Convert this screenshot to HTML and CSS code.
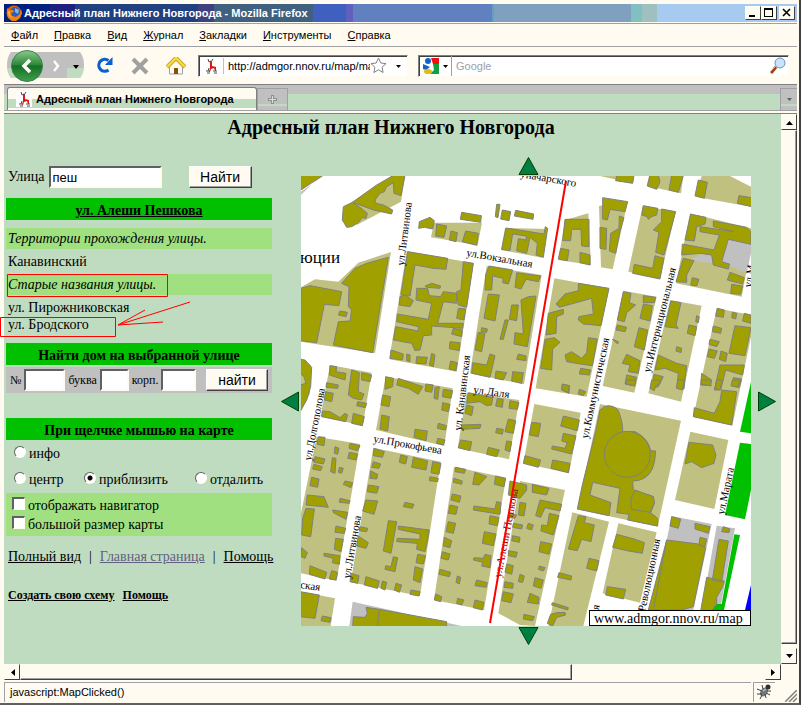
FILE: index.html
```html
<!DOCTYPE html>
<html lang="ru">
<head>
  <meta charset="UTF-8">
  <title>Адресный план Нижнего Новгорода</title>
  <meta name="viewport" content="width=device-width, initial-scale=1.0">
  <link rel="stylesheet" href="styles.css">
</head>
<body>
<div class="window">

  <header class="titlebar">
    <svg class="icon" width="16" height="16" viewBox="0 0 16 16">
      <circle cx="8" cy="8" r="7.5" fill="#e66000"/>
      <circle cx="9" cy="7" r="5" fill="#2a5fb8"/>
      <path d="M9 3l4 2-1 4-3-2z" fill="#7ab8e8"/>
      <path d="M1 3l2 2 4 0 1 2-3 1 1 3 4 1 4-3 1-5 1 4-2 5-4 3H6l-4-3-1-5z" fill="#f08010"/>
      <path d="M2 6l2 1 0 3 3 3-4-2z" fill="#ffc040"/>
    </svg>
    <span class="title">Адресный план Нижнего Новгорода - Mozilla Firefox</span>
    <button class="win-btn" aria-label="Свернуть"><svg width="12" height="10"><path d="M2 7h6v2H2z"/></svg></button>
    <button class="win-btn" aria-label="Развернуть"><svg width="12" height="10"><path d="M1 0h9v9H1zM2 2v6h7V2z" fill-rule="evenodd"/></svg></button>
    <button class="win-btn close" aria-label="Закрыть"><svg width="12" height="10"><path d="M2 1l7 7M9 1L2 8" stroke="#000" stroke-width="1.6"/></svg></button>
  </header>

  <nav class="menu">
    <a href="#"><u>Ф</u>айл</a>
    <a href="#"><u>П</u>равка</a>
    <a href="#"><u>В</u>ид</a>
    <a href="#"><u>Ж</u>урнал</a>
    <a href="#"><u>З</u>акладки</a>
    <a href="#"><u>И</u>нструменты</a>
    <a href="#"><u>С</u>правка</a>
  </nav>

  <div class="toolbar">
    <button class="tool nav-pair" aria-label="Назад и вперёд">
      <svg width="78" height="32" viewBox="0 0 78 32">
        <defs>
          <linearGradient id="back" x1="0" y1="0" x2="0" y2="1">
            <stop offset="0" stop-color="#8cc88c"/><stop offset=".45" stop-color="#2f8a3c"/><stop offset=".5" stop-color="#157020"/><stop offset="1" stop-color="#3fa050"/>
          </linearGradient>
        </defs>
        <path d="M4 2h69q4 5 4 13t-4 13H4q-4-5-4-13T4 2z" fill="#c0c0c0"/>
        <path d="M1 18h27v10H4q-3-4-3-10zM60 18h17q-1 6-4 10H60z" fill="#c0dcc0"/>
        <circle cx="20" cy="16" r="15.5" fill="url(#back)" stroke="#408050"/>
        <path d="M23 10l-6 6 6 6" fill="none" stroke="#fff" stroke-width="3.5"/>
        <path d="M47 11l4 5-4 5" fill="none" stroke="#fffbf0" stroke-width="2.5"/>
        <path d="M66 15h6l-3 4z"/>
      </svg>
    </button>
    <button class="tool" aria-label="Обновить">
      <svg width="17" height="17" viewBox="0 0 17 17"><path d="M12.500 13a6 6 0 1 1 0-9.500" fill="none" stroke="#0a60d0" stroke-width="3.200"/><path d="M16.500 0v8H9z" fill="#0a60d0"/></svg>
    </button>
    <button class="tool" aria-label="Остановить">
      <svg width="18" height="18" viewBox="0 0 18 18"><path d="M2 2l14 14M16 2L2 16" stroke="#a0a0a0" stroke-width="4"/></svg>
    </button>
    <button class="tool" aria-label="Домой">
      <svg width="20" height="18" viewBox="0 0 20 18">
        <path d="M3.500 9v8h13V9L10 3z" fill="#fffbf0" stroke="#a0a0b0"/>
        <path d="M8 11h4v6H8z" fill="#8a5010"/>
        <path d="M1 10l9-9 9 9" fill="none" stroke="#c09020" stroke-width="4"/>
        <path d="M1 10l9-9 9 9" fill="none" stroke="#f8d840" stroke-width="2.500"/>
      </svg>
    </button>
    <div class="box address">
      <span class="favicon"><svg width="16" height="16" viewBox="0 0 16 16"><path d="M5 1l1 3 2-1M10 1l-2 3" fill="none" stroke="#604040"/><path d="M7 3l2 1v4l4 1v4h-1l-1-3-3 1-1 3H6l1-4z" fill="#d81818"/><path d="M3 13h4M10 13h4M4 15h3M11 15h3M6 10l-1 3" stroke="#505050"/></svg></span>
      <input type="text" value="http://admgor.nnov.ru/map/map.php" aria-label="Адрес">
      <svg width="17" height="17" viewBox="0 0 17 17"><path d="M8.500 1l2.300 5 5.200.6-3.900 3.600 1 5.300-4.600-2.700-4.600 2.700 1-5.300L1 6.600 6.200 6z" fill="#fff" stroke="#808080"/></svg>
      <svg class="drop" width="20" height="8" viewBox="0 0 20 8"><path d="M9 3h5l-2.500 3z"/></svg>
    </div>
    <div class="box search">
      <svg width="17" height="16" viewBox="0 0 17 16">
        <path d="M8 0h8v6h-6z" fill="#f01010"/><path d="M10 6h6v10H7l4-4z" fill="#10a040"/>
        <circle cx="5" cy="3" r="3" fill="#1060d0"/><path d="M0 6l7 3-4 3-3-1z" fill="#1060d0"/><ellipse cx="5" cy="13.500" rx="4" ry="2.500" fill="#e8b810"/>
      </svg>
      <svg class="engine" width="11" height="8" viewBox="0 0 11 8"><path d="M3 3h5L5.500 6z"/></svg>
      <input type="text" placeholder="Google" aria-label="Поиск Google">
      <svg width="17" height="17" viewBox="0 0 17 17"><path d="M7 10l-5 6" stroke="#a04010" stroke-width="3"/><path d="M6 10l-5 5" stroke="#f0a040"/><circle cx="11" cy="6" r="5" fill="#c8e4ff" stroke="#7090b8"/></svg>
    </div>
  </div>

  <div class="tabs">
    <div class="tab">
      <span class="favicon"><svg width="16" height="16" viewBox="0 0 16 16"><path d="M5 1l1 3 2-1M10 1l-2 3" fill="none" stroke="#604040"/><path d="M7 3l2 1v4l4 1v4h-1l-1-3-3 1-1 3H6l1-4z" fill="#d81818"/><path d="M3 13h4M10 13h4M4 15h3M11 15h3M6 10l-1 3" stroke="#505050"/></svg></span>
      Адресный план Нижнего Новгорода
    </div>
    <button class="tab-btn" aria-label="Новая вкладка"><svg width="9" height="9"><path d="M3 0h3v3h3v3H6v3H3V6H0V3h3z" fill="#909090"/><path d="M4 1h1v3h3v1H5v3H4V5H1V4h3z" fill="#ddd"/></svg></button>
    <button class="tab-btn list" aria-label="Список вкладок"><svg width="7" height="5"><path d="M1 1h5L3.500 4z" fill="#606060"/></svg></button>
  </div>

  <div class="viewport">
    <div class="page">
      <h1>Адресный план Нижнего Новгорода</h1>

      <div class="columns">
        <aside class="panel">
          <form class="street">
            <label for="street">Улица</label>
            <input type="text" id="street" value="пеш">
            <button type="button">Найти</button>
          </form>

          <h2><a href="#">ул. Алеши Пешкова</a></h2>
          <h3>Территории прохождения улицы.</h3>
          <p>Канавинский</p>
          <h3>Старые названия улицы.</h3>
          <p>ул. Пирожниковская<br>ул. Бродского</p>

          <h2>Найти дом на выбранной улице</h2>
          <form class="house">
            <label for="num">№</label> <input type="text" id="num" class="num">
            <label for="letter">буква</label> <input type="text" id="letter" class="letter">
            <label for="block">корп.</label> <input type="text" id="block" class="block">
            <button type="button">найти</button>
          </form>

          <h2>При щелчке мышью на карте</h2>
          <form class="mode">
            <label class="info"><input type="radio" name="mode">инфо</label>
            <label><input type="radio" name="mode">центр</label>
            <label><input type="radio" name="mode" checked>приблизить</label>
            <label><input type="radio" name="mode">отдалить</label>
          </form>
          <div class="options">
            <label><input type="checkbox">отображать навигатор</label>
            <label><input type="checkbox">большой размер карты</label>
          </div>

          <div class="links">
            <a href="#">Полный вид</a> <span>|</span> <a href="#" class="visited">Главная страница</a> <span>|</span> <a href="#">Помощь</a>
          </div>
          <div class="links small">
            <a href="#">Создать свою схему</a> <a href="#">Помощь</a>
          </div>
        </aside>

        <div class="map-grid">
          <a href="#" class="up" aria-label="Север"><svg width="21" height="18"><path d="M10.500 0.500L20 17.500H1z" fill="#008040" stroke="#004000"/></svg></a>
          <a href="#" class="left" aria-label="Запад"><svg width="18" height="21"><path d="M0.500 10.500L17.500 1v19z" fill="#008040" stroke="#004000"/></svg></a>
          <svg class="map" viewBox="301 176 450 450">
            <rect x="301" y="176" width="450" height="450" fill="#fff"/>

            <!-- north-west -->
            <g transform="translate(290 150) scale(.33333)">
              <g class="land">
                <path d="M190 155L305 78H345L333 155 200 225zM432 218L576 218 563 286 423 262zM645 234L773 237 757 323 633 300z"/>
                <path d="M33 412L75 388 145 395 205 338 303 306 255 610 33 575z"/>
                <path d="M350 303L551 340 500 665 298 628zM590 348L755 375 702 703 540 670z"/>
              </g>
              <path class="grey" d="M33 125L100 78 90 78 33 135z"/>
              <g class="bld">
                <path d="M30 122L100 75H30zM187 157L160 170 157 210 170 232 185 230 205 218 217 203 228 205 232 190 210 172z"/>
                <path d="M187 157L260 105 310 76H345L333 137 312 130 310 98 290 110 283 125 270 130 255 150 258 160 280 165 308 180 305 192 250 180z"/>
                <path d="M388 215L420 202 433 212 428 237 403 232 386 235zM440 222L470 228 462 262 437 258zM483 243L502 248 498 275 478 270zM527 243L565 250 560 286 517 275zM515 187L574 197 572 217 511 208z"/>
                <path d="M620 163H630L624 203 616 200zM637 180L662 185 657 212 632 207zM677 181L731 192 729 208 673 198z"/>
                <path d="M648 234L762 252 766 230 773 235 760 322 738 315 742 280 720 262 710 310 680 302 685 266 710 270 708 258 668 252 660 302 635 298z"/>
                <path d="M33 415L60 407 155 425 147 467 103 463 80 578 30 572zM155 400L195 355 230 340 295 322 248 608 130 585 145 515 180 513 185 480 175 470 177 410zM150 483L172 487 168 500 145 495z"/>
                <path d="M353 305L473 325 468 358 430 355 375 345 360 438 333 435zM520 335L550 340 530 472 505 465 500 425 513 420z"/>
                <path d="M405 408L425 400 452 408 450 415 410 412zM380 415L413 415 418 437 452 440 460 425 500 430 500 460 460 455 443 520 520 520 518 535 425 528 425 555 400 557 390 600 375 602 365 580 310 570 317 530 385 543 385 530 320 515 322 492 415 508 425 460 378 450z"/>
                <path d="M330 440L345 435 370 452 360 470 328 465zM505 475L527 477 522 510 500 505zM490 535L517 540 515 560 485 552zM480 575L510 578 508 602 478 596zM482 633L502 638 498 662 477 657zM303 600L340 612 338 630 300 625zM350 612L360 615 360 635 350 632zM380 620L412 622 408 642 378 640zM425 610L435 615 430 650 418 645z"/>
                <path d="M597 348L668 360 655 402 638 398 640 385 608 378 605 420 585 420 587 375zM680 368L752 378 745 395 708 388 693 417 675 412zM595 432L628 435 615 513 582 505zM665 465L685 465 680 512 658 508zM645 510L655 510 640 568 630 568zM565 547L585 550 575 605 555 600zM575 533L592 537 590 547 573 545z"/>
                <path d="M693 450L715 440 738 438 712 590 672 582 675 548 700 552zM600 612L615 617 600 682 545 670 548 638 590 645zM618 663L650 668 640 690 615 685zM668 665L700 668 695 700 665 693zM685 612L708 618 708 632 680 628z"/>
              </g>
            </g>

            <!-- north-east -->
            <g transform="translate(520 150) scale(.33333)">
              <g class="land">
                <path d="M240 78H342L338 100zM387 78H490L483 130 380 108zM545 78H630L693 110V170L525 140z"/>
                <path d="M205 190L213 345 115 330 135 210zM237 168L323 155 278 358 243 352zM368 168L467 185 420 387 325 365zM510 190L693 235V290L665 440 468 400z"/>
                <path d="M103 385L267 415 200 740 47 715zM310 422L410 440 343 728 248 708zM450 450L545 467 483 755 385 730zM590 475L693 495V560L637 827 520 800z"/>
              </g>
              <path class="grey" d="M610 262L693 283V310L680 370 610 340zM545 312L580 318 575 340 510 330z"/>
              <g class="bld">
                <path d="M290 76H342L338 100 287 92zM390 76H415L420 95 410 118 382 108zM455 76H490L475 127 447 120zM535 90L562 97 553 145 525 137zM657 137L695 143V170L652 160z"/>
                <path d="M135 208H207V290L185 288 183 238 155 238 152 272 128 272zM122 295L147 300 142 332 115 327zM180 307L210 315V345L180 338z"/>
                <path d="M248 143L323 155 315 185 270 178 262 210 248 207zM240 232L260 235 258 298 240 295zM298 198L312 203 300 245 287 310 268 303 272 250 297 235z"/>
                <path d="M370 167L413 175 410 195 395 200 385 208 382 200 365 195zM425 177L467 185 432 315 407 307 417 247 400 240 425 215zM405 317L432 325 420 387 338 370 343 343 398 355z"/>
                <path d="M512 193L558 202 555 222 530 230 523 273 495 270zM580 213L680 232 693 245V283L625 268 605 335 628 342 625 357 580 345 575 315 540 310 485 315 487 282 582 300 598 255 540 245 540 230 640 245 580 230zM490 325L522 332 500 375 500 397 468 395zM517 383L537 388 530 408 512 405zM630 367L673 383 668 402 622 390zM635 403L668 408 662 433 632 430z"/>
                <path d="M175 400L267 415 243 527 190 522 175 510 177 500 220 492 215 445 118 472 108 462 135 432 175 422zM85 490L130 478 130 492 110 500 108 550 78 555zM75 568L103 563 120 577 98 597 95 660 62 655zM205 563L232 567 217 647 168 640 140 635 135 615 155 605 185 625 200 608zM182 655L212 660 208 675 178 672zM127 703L148 707 147 730 125 720z"/>
                <path d="M310 425L333 430 328 458 347 465 320 488 313 515 292 510zM370 437L407 442 403 458 370 458zM370 462L397 467 390 513 360 505zM292 525L320 532 315 545 288 540zM357 533L383 540 373 600 343 590zM320 613L360 632 355 670 325 665 330 645 307 640zM320 675L350 682 343 708 315 702zM277 568L295 575 293 582z"/>
                <path d="M453 453L483 458 468 525 475 535 435 530zM507 525L530 530 525 557 502 550zM530 497L538 500 535 518 527 515zM470 590L485 595 483 608 468 603zM415 615L470 640 500 647 492 717 470 715 475 670 435 655 405 660zM402 673L430 680 415 710 395 715z"/>
                <path d="M592 475L613 480 610 502 587 498zM637 487L650 490 647 507 635 503zM673 490L693 495V520L668 513zM645 527L693 533 675 617 627 610zM580 528L605 535 602 550 577 545zM570 568L598 575 590 590 567 583zM567 597L592 603 583 625 562 620zM603 603L622 610 617 635 598 628zM600 645L673 645 668 675 617 660 602 720 583 720zM545 670L575 690 570 707 542 705zM640 683L665 687 658 712 637 707z"/>
              </g>
            </g>

            <!-- south-west -->
            <g transform="translate(290 380) scale(.33333)">
              <g class="land">
                <path d="M33 -65L62 -45 60 40 33 95zM120 -45L245 -22 218 137 92 108zM287 -10L488 25 463 198 258 150zM530 38L688 60 657 238 503 205z"/>
                <path d="M80 170L210 192 140 602 33 580V400zM250 203L452 245 390 648 182 607zM492 260L648 293 582 690 432 660zM33 635L135 655 122 738H33z"/>
              </g>
              <path class="grey" d="M188 665L300 690 515 738H178z"/>
              <g class="bld">
                <path d="M30 -62L45 -60 65 -38 62 20 50 60 30 95V15L48 10 42 -10 30 -20zM120 -43L140 -40 138 -25 168 -20 165 0 118 -15zM185 -30L208 -22 205 35 222 42 215 60 190 55 175 45zM215 -22L245 -15 240 5 215 0zM110 8L145 15 143 25 108 22zM107 35L130 40 125 65 103 60zM98 93L120 95 150 113 165 100 173 105 167 125 95 110zM190 100L223 110 217 137 185 130zM203 65L230 70 226 83 200 77z"/>
                <path d="M287 -10L310 -5 308 20 285 28zM325 -5L398 20 385 43 355 25 320 15zM408 12L430 15 425 37 405 33zM435 22L448 20 443 58 432 55zM460 28L488 32 483 55 457 50zM278 45L302 50 297 80 273 75zM458 68L480 73 475 95 455 90zM275 105L298 110 293 153 270 147zM375 148L412 153 408 182 372 172zM445 130L470 137 466 150 442 145zM443 175L465 180 460 195 440 190z"/>
                <path d="M535 38L608 52 605 75 590 77 570 65 530 70zM530 75L550 80 545 107 525 100zM622 55L640 58 637 82 617 78zM660 62L687 68 682 88 657 85zM515 135L573 133 570 145 515 148zM620 145L640 148 637 163 617 158zM655 117L677 122 670 160 645 155zM512 180L545 185 540 212 505 203zM595 202L628 210 620 230 590 223zM650 183L665 185 660 215 645 210z"/>
                <path d="M85 170L105 172 102 197 82 193zM180 190L210 197 203 212 177 205zM178 217L203 222 198 240 173 235zM135 200L147 205 143 223 133 220zM75 230L105 237 100 252 72 247zM72 253L97 260 92 272 68 267zM127 233L138 235 135 280 122 275zM148 262L160 265 155 280 145 277zM65 292L87 297 83 322 60 317zM165 303L188 308 183 323 160 313zM52 345L102 350 115 382 48 375zM150 355L180 362 178 370 148 367zM48 385L73 387 62 470 35 465 38 415zM128 390L173 397 168 418 130 398zM138 438L167 445 163 460 135 457zM137 475L160 478 153 515 133 508zM35 503L52 518 45 535 33 530zM102 520L150 527 148 553 127 548 130 535 102 528zM60 557L110 577 105 597 58 583zM125 572L143 577 138 600 118 597z"/>
                <path d="M252 205L283 215 277 232 250 227zM250 245L272 252 267 265 245 262zM242 273L263 283 260 297 240 295zM235 315L267 320 260 340 232 335zM228 360L263 363 252 403 218 393zM332 225L352 230 347 252 328 247zM370 232L413 243 408 270 365 262zM428 245L453 250 447 283 423 278zM420 290L445 295 443 305 418 302zM345 367L372 373 367 385 340 380zM295 422L320 425 303 520 280 513zM325 438L418 450 412 485 405 515 380 508 382 490 320 485 322 475 390 478 390 462 325 448zM210 440L233 445 230 455 208 452zM205 468L235 488 228 505 200 498zM310 530L323 533 315 575 285 568 287 557 303 560zM383 523L407 527 400 552 378 548zM375 560L398 567 390 608 370 600zM183 580L207 587 203 610 180 605zM228 590L268 603 262 625 223 615zM277 603L290 607 285 630 273 625zM318 610L335 615 328 637 313 630zM363 630L390 635 387 648 360 643z"/>
                <path d="M497 262L527 268 523 280 495 275zM492 295L517 303 515 313 490 307zM555 277L590 290 567 315 548 313zM617 288L647 295 642 320 613 313zM487 342L513 348 508 367 483 360zM480 375L503 380 498 403 475 400zM552 378L615 387 620 365 633 368 630 403 550 390zM600 407L627 413 622 437 597 432zM475 425L497 430 490 460 468 455zM583 455L618 462 610 497 577 490zM463 472L485 482 480 503 460 498zM457 515L480 522 475 540 453 535zM552 533L580 535 585 523 603 527 600 563 575 558 578 547 550 540zM450 568L482 577 478 590 447 583zM502 588L512 592 508 612 498 607zM560 600L592 608 588 622 555 617zM437 642L455 650 452 665 433 660zM503 655L522 660 515 675 500 670zM555 660L582 667 577 690 550 683z"/>
                <path d="M30 635L88 645 75 715 30 710zM97 708L123 713 120 727 93 722zM228 682L268 688 470 725V740H188L190 710 225 712 232 700zM268 688L262 738"/>
              </g>
            </g>

            <!-- south-east -->
            <g transform="translate(520 380) scale(.33333)">
              <g class="land">
                <path d="M43 72L182 98 147 280 10 250zM0 303L135 330 45 738 0 735 -65 700zM240 72L483 122 413 440 172 388zM511 155L625 180 583 387 465 360zM157 397L267 425 190 738H85zM295 430L410 457 360 668 248 640z"/>
              </g>
              <path class="grey" d="M455 408L575 432 520 690H390L440 480zM590 437L645 445 600 690H545z"/>
              <path class="park" d="M693 5V160L660 155zM660 188L693 192V330L675 418 615 405zM643 463L660 465 612 690H575L577 672 605 672z"/>
              <path class="river" d="M693 615V690H675z"/>
              <g class="bld">
                <path d="M127 12L148 17 145 37 125 30zM178 28L197 35 190 47 175 42zM35 127L62 130 55 170 28 165zM130 108L178 120 172 152 122 138zM130 160L168 168 155 222 95 207 97 198 135 205 142 188 125 183zM15 227L62 240 55 262 10 250zM98 240L150 250 145 278 93 265z"/>
                <path d="M320 0L347 0 345 18 318 12zM395 0H420V10L408 15 403 32 390 25zM473 0H493L487 30 470 25zM543 0H573V18L545 12zM590 0H607L600 30 585 25zM637 0H660L655 22 633 18zM605 30L650 35 635 135 520 110 523 83 583 100 600 65z"/>
                <path d="M240 90Q265 65 293 88 310 125 308 160 325 152 345 155 385 175 392 212L407 213Q405 275 375 293 355 305 338 303L340 330 400 350 403 370 392 398 413 415V438L323 420 327 403 290 398 300 325 218 307 210 345 273 368 267 407 172 387 187 315 228 150z"/>
                <circle cx="322" cy="223" r="69"/><path d="M345 330L400 350 403 370 390 397 335 388 332 360z"/>
                <path d="M507 187L578 195 588 225 582 250 545 263 515 245 495 252z"/>
                <path d="M175 407L198 410 193 428 223 435 213 485 185 478 172 512 145 507zM290 463L343 477 373 488 367 520 320 512 278 502zM207 535L237 542 230 573 200 565zM117 578L155 588 153 600 113 592zM262 620L317 628 310 657 257 645zM97 668L145 683 143 690 95 675zM92 703L110 698 135 697 137 705 110 712 98 738 82 730z"/>
                <path d="M-30 303L20 315 20 330 0 355 -35 345zM37 313L87 325 80 345 37 337zM60 360L125 373 120 393 75 383 62 412 47 407zM88 400L117 407 100 465 63 453 65 435 82 437zM0 367L18 370 12 408 -5 405zM25 430L40 435 35 450 20 445zM62 485L95 492 87 523 57 515zM-32 400L-10 405 -15 415 -35 412zM-20 430L8 435 5 447 -22 442zM-22 467L0 472 -2 487 -25 482zM-35 512L-8 517 -12 532 -35 527zM-40 552L-20 557 -25 583 -45 577zM0 583L13 588 8 607 -5 605zM58 558L75 563 70 573 55 568zM45 593L70 600 63 625 40 618zM30 640L57 652 55 672 22 667zM12 703L43 710 38 722 10 717zM-45 605L-20 610 -22 625 -48 622zM-50 635L-20 642 -27 668 -55 662z"/>
                <path d="M455 410L482 417 475 445 450 438zM525 430L570 440 565 460 525 447zM610 440L630 447 627 458 605 455zM540 472L560 477 555 500 537 495zM440 480L535 492 557 503 520 680 485 690H385zM440 480L400 690"/>
                <path d="M597 478L625 483 605 605 577 600zM560 592L613 603 608 620 590 652 590 672 575 692H542z"/>
              </g>
            </g>

            <g class="names">
              <text transform="translate(404 266) rotate(-83)">ул.Литвинова</text>
              <text transform="translate(466 256) rotate(10)">ул.Вокзальная</text>
              <text transform="translate(520 177) rotate(10)">уначарского</text>
              <text transform="translate(461 431) rotate(-83)">ул. Канавинская</text>
              <text transform="translate(473 393) rotate(8)">ул.Даля</text>
              <text transform="translate(373 442) rotate(10)">ул.Прокофьева</text>
              <text transform="translate(311 461) rotate(-79)">ул.Долгополова</text>
              <text transform="translate(350 579) rotate(-80)">ул.Литвинова</text>
              <text transform="translate(588 439) rotate(-78)">ул.Коммунистическая</text>
              <text transform="translate(650 373) rotate(-76)">ул.Интернациональная</text>
              <text transform="translate(724 515) rotate(-78)">ул.Марата</text>
              <text transform="translate(645 612) rotate(-78)">Революционная</text>
              <text transform="translate(300 588) rotate(8)">ская</text>
              <text transform="translate(598 615) rotate(-80)">ая</text>
              <text transform="translate(751 288) rotate(-80)">ул.М</text>
              <text class="chosen" transform="translate(501 578) rotate(-79)">ул.Алеши Пешкова</text>
              <text class="big" x="300" y="263">юции</text>
            </g>
            <path class="route" d="M566 181L490 623"/>
            <rect x="589.500" y="610.500" width="161" height="15" fill="#fff" stroke="#000"/>
            <text class="site" x="594" y="623">www.admgor.nnov.ru/map</text>
          </svg>
          <a href="#" class="right" aria-label="Восток"><svg width="18" height="21"><path d="M17.500 10.500L0.500 1v19z" fill="#008040" stroke="#004000"/></svg></a>
          <a href="#" class="down" aria-label="Юг"><svg width="21" height="18"><path d="M10.500 17.500L20 0.500H1z" fill="#008040" stroke="#004000"/></svg></a>
        </div>
      </div>

      <!-- red notes over the page -->
      <svg class="notes" width="200" height="70" viewBox="0 0 200 70">
        <path d="M7.500 4.500h160v22H7.500zM0.500 47.500h115v19H0.500z"/>
        <path d="M190 32L118 55 145 40M118 55L163 52"/>
      </svg>
    </div>

    <div class="vscroll">
      <button aria-label="Вверх"><svg width="9" height="5"><path d="M1 5h7L4.500 1z"/></svg></button>
      <div class="thumb"></div>
      <button aria-label="Вниз"><svg width="9" height="5"><path d="M1 0h7L4.500 4z"/></svg></button>
    </div>
    <div class="hscroll">
      <button aria-label="Влево"><svg width="5" height="9"><path d="M5 1v7L1 4.500z"/></svg></button>
      <div class="thumb"></div>
      <button aria-label="Вправо"><svg width="5" height="9"><path d="M0 1v7l4-3.500z"/></svg></button>
    </div>
  </div>

  <footer class="status">
    <span class="message">javascript:MapClicked()</span>
    <span class="bug"><svg width="18" height="17" viewBox="0 0 18 17"><ellipse cx="8" cy="9" rx="3.500" ry="5" transform="rotate(35 8 9)" fill="#707880"/><path d="M1 6l5 2M1 11h5M4 16l2-4M14 12l-4-2M15 8h-4M6 2l1 4M10 15l-1-4" stroke="#404040"/><circle cx="12" cy="4" r="2.500" fill="#303030"/><path d="M7 8l3-2" stroke="#dde"/></svg></span>
    <svg class="grip" width="12" height="12"><path d="M0 12L12 0M4 12l8-8M8 12l4-4" stroke="#808080" stroke-width="1.500"/></svg>
  </footer>

</div>
</body>
</html>
```
FILE: styles.css
```css
* {
  box-sizing: border-box;
}
body {
  margin: 0;
  background: #fffbf0;
  color: #000;
  font-family: "Liberation Sans", Arial, sans-serif;
  font-size: 11px;
}
a {
  color: #000;
}
button, input {
  font-family: "Liberation Sans", Arial, sans-serif;
  margin: 0;
}
svg {
  display: block;
  flex: none;
}
.window {
  display: flex;
  flex-direction: column;
  min-height: 100vh;
  padding: 4px 2px 1px 4px;
  border-right: 2px solid #404040;
  border-bottom: 2px solid #606060;
}

/* title bar */
.titlebar {
  display: flex;
  align-items: center;
  height: 18px;
  padding: 0 2px 0 2px;
  background: linear-gradient(90deg, #002080 0 46px, #202080 0 71px, #204080 0 194px, #404080 0 210px, #406080 0 309px, #4060c0 0 342px, #6060c0 0 349px, #6080c0 0 488px, #60a0c0 0 490px, #80a0c0 0 627px, #80c0c0 0 638px, #a0c0c0 0 653px, #a6caf0 0);
}
.title {
  flex: 1;
  padding-left: 2px;
  color: #fff;
  font-weight: bold;
  font-size: 11px;
  white-space: nowrap;
}
.win-btn {
  width: 16px;
  height: 14px;
  padding: 1px;
  background: #fffbf0;
  border: 1px solid;
  border-color: #fff #404040 #404040 #fff;
}
.close {
  margin-left: 2px;
}

/* menu */
.menu {
  display: flex;
  align-items: center;
  gap: 16px;
  height: 24px;
  margin-top: 1px;
  padding-left: 7px;
  border-top: 1px solid #a0a0a4;
  border-bottom: 1px solid #a0a0a4;
}
.menu a {
  text-decoration: none;
}

/* toolbar */
.toolbar {
  display: flex;
  align-items: center;
  height: 37px;
  padding: 0 8px 0 2px;
}
.tool {
  width: 36px;
  padding: 0;
  border: none;
  background: none;
}
.tool svg {
  margin: 0 auto;
}
.nav-pair {
  width: 80px;
}
.box {
  display: flex;
  align-items: center;
  height: 22px;
  background: #fff;
  border: 1px solid;
  border-color: #808080 #fffbf0 #fffbf0 #808080;
  box-shadow: inset 1px 1px #404040;
}
.box input {
  flex: 1;
  min-width: 0;
  padding: 0 0 0 4px;
  border: none;
  background: none;
  font-size: 11px;
  outline: none;
}
.box input::placeholder {
  color: #a0a0a4;
}
.address {
  flex: 0 1 210px;
  margin-left: 4px;
  padding-left: 4px;
}
.address .favicon {
  padding-right: 4px;
  border-right: 1px solid #c0c0c0;
}
.search {
  flex: 1;
  margin-left: 10px;
  padding: 0 2px 0 4px;
}
.engine {
  width: 12px;
  height: 20px;
  padding: 6px 0;
  border-right: 1px solid #a0a0a4;
}

/* tabs */
.tabs {
  display: flex;
  align-items: flex-end;
  height: 27px;
  padding-left: 3px;
  background: linear-gradient(#c0c0c0 9px, #c0dcc0 9px);
  border-top: 1px solid #808080;
  border-bottom: 1px solid #a0a0a4;
}
.tab {
  display: flex;
  align-items: center;
  gap: 4px;
  height: 23px;
  width: 250px;
  padding-left: 8px;
  background: linear-gradient(#fffbf0 11px, #c0dcc0 11px 20px, #fffbf0 20px);
  border: 1px solid #808080;
  border-bottom: none;
  border-radius: 3px 3px 0 0;
  font-weight: bold;
  white-space: nowrap;
}
.tab .favicon {
  background: #fff;
}
.tab-btn {
  display: flex;
  align-items: center;
  justify-content: center;
  width: 31px;
  height: 22px;
  padding: 0;
  background: linear-gradient(#c0c0c0 15px, #c0dcc0 15px 17px, #c0c0c0 17px);
  border: 1px solid #a0a0a4;
  border-bottom: none;
}
.list {
  width: 17px;
  margin-left: auto;
  border-right: none;
}

/* page area */
.viewport {
  flex: 1;
  display: grid;
  grid-template-columns: 1fr 16px;
  grid-template-rows: 1fr 16px;
  margin-top: 2px;
  border-top: 1px solid #808080;
}
.page {
  position: relative;
  background: #c0dcc0;
  padding: 0 5px 17px 2px;
  font-family: "Liberation Serif", "Times New Roman", serif;
  font-size: 14px;
}
.page h1 {
  margin: 0;
  font-size: 20px;
  line-height: 26px;
  text-align: center;
}
.columns {
  display: flex;
  align-items: flex-start;
  gap: 9px;
  padding-top: 17px;
}
.panel {
  width: 266px;
  padding-top: 9px;
}
.panel h2 {
  margin: 0;
  height: 22px;
  background: #00c000;
  font-size: 14px;
  line-height: 25px;
  text-align: center;
}
.panel h3 {
  margin: 4px 0 0;
  padding-left: 2px;
  background: #a0e080;
  font-size: 14px;
  font-style: italic;
  font-weight: normal;
  line-height: 21px;
}
.panel h2 + h3 {
  margin-top: 8px;
}
.panel p {
  margin: 4px 0 0;
  padding-left: 2px;
  line-height: 17px;
}
.panel input[type="text"] {
  height: 22px;
  padding: 0 2px;
  background: #fff;
  border: 2px solid;
  border-color: #606060 #fffbf0 #fffbf0 #606060;
  border-radius: 0;
  font-size: 13px;
}
.panel button {
  height: 22px;
  padding: 0;
  background: #fffbf0;
  border: 1px solid;
  border-color: #fff #404040 #404040 #fff;
  box-shadow: inset -1px -1px #a0a0a4;
  font-size: 14px;
}
.street {
  display: flex;
  align-items: center;
  gap: 4px;
  margin-bottom: 10px;
  padding-left: 2px;
}
.street input {
  width: 113px;
}
.street button {
  width: 63px;
  margin-left: 23px;
}
.house {
  display: flex;
  align-items: center;
  gap: 3px;
  height: 26px;
  margin: 2px 0 25px;
  padding: 0 4px;
  background: #c0c0c0;
  font-size: 12px;
}
.house button {
  width: 62px;
  margin-left: auto;
}
.house .num {
  width: 41px;
}
.house .letter {
  width: 29px;
}
.house .block {
  width: 35px;
}
.panel p + h2 {
  margin-top: 10px;
}
.mode {
  display: grid;
  grid-template-columns: 70px 111px 1fr;
  padding: 1px 0 0 8px;
}
.mode label, .options label {
  display: flex;
  align-items: center;
  gap: 3px;
  height: 26px;
}
.mode .info {
  grid-column: 1 / -1;
}
.mode input, .options input {
  appearance: none;
  width: 12px;
  height: 12px;
  background: #fff;
  border: 1px solid;
  border-color: #606060 #fffbf0 #fffbf0 #606060;
  margin-bottom: 4px;
}
.mode input {
  border-radius: 50%;
}
.mode input:checked {
  background: radial-gradient(#000 2px, #fff 3px);
}
.options {
  padding: 3px 6px 2px;
  background: #a0e080;
}
.options label {
  height: 19px;
}
.options input {
  width: 13px;
  height: 13px;
  border-width: 2px 1px 1px 2px;
}
.links {
  display: flex;
  gap: 8px;
  padding: 12px 0 0 2px;
  line-height: 17px;
  white-space: nowrap;
}
.links .visited {
  color: #606080;
}
.small {
  padding-top: 22px;
  font-size: 12px;
  font-weight: bold;
}

/* map with pan arrows */
.map-grid {
  flex: 1;
  min-width: 0;
  display: grid;
  grid-template-columns: 18px 1fr 23px;
  column-gap: 2px;
  align-items: center;
  justify-items: center;
}
.map {
  width: 100%;
  height: auto;
}
.up, .down {
  grid-column: 1 / -1;
}
.up {
  padding-bottom: 1px;
}
.down {
  padding-top: 1px;
}
.right {
  justify-self: end;
}
.land path {
  fill: #c0c080;
}
.grey {
  fill: #c0c0c0;
}
.park {
  fill: #00c000;
}
.river {
  fill: #0000ff;
}
.bld path, .bld circle {
  fill: #a0a000;
  stroke: #808080;
  stroke-width: 3;
}
.names text {
  font-size: 11px;
}
.names .big {
  font-size: 17px;
}
.names .chosen {
  fill: #a00000;
}
.route {
  stroke: #ff0000;
  stroke-width: 2;
}
.site {
  font-size: 14px;
}
.notes {
  position: absolute;
  left: -4px;
  top: 156px;
  pointer-events: none;
}
.notes path {
  fill: none;
  stroke: #ff0000;
}

/* scroll bars */
.vscroll, .hscroll {
  display: flex;
  background: #fffbf0;
}
.vscroll {
  flex-direction: column;
}
.vscroll button, .hscroll button {
  display: flex;
  align-items: center;
  justify-content: center;
  width: 16px;
  height: 16px;
  padding: 0;
  background: #fffbf0;
  border: 1px solid;
  border-color: #fffbf0 #404040 #404040 #fffbf0;
}
.thumb {
  border: 1px solid;
  border-color: #fffbf0 #404040 #404040 #fffbf0;
  box-shadow: inset -1px -1px #a0a0a4;
}
.vscroll .thumb {
  flex: 1;
  margin-bottom: 4px;
}
.hscroll .thumb {
  width: 71%;
}
.hscroll button:last-child {
  margin-left: auto;
}

/* status bar */
.status {
  display: flex;
  gap: 2px;
  height: 20px;
  margin-top: 2px;
}
.message, .bug {
  border-top: 1px solid #a0a0a4;
  border-left: 1px solid #a0a0a4;
}
.message {
  flex: 1;
  padding-left: 5px;
  font-size: 11px;
  line-height: 19px;
}
.bug {
  width: 22px;
  padding-left: 2px;
}
.grip {
  align-self: flex-end;
  margin-left: 8px;
}
```
